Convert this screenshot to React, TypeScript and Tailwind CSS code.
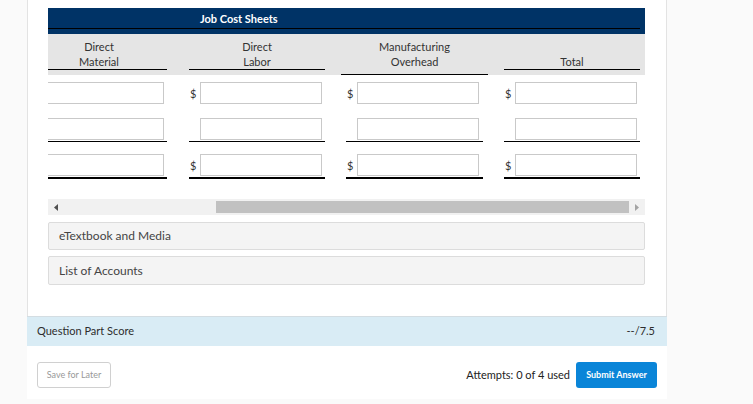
import React from "react";

const cols = [
  "w-[136px]",
  "ml-[22px] w-[136px]",
  "ml-[21px] w-[137px]",
  "ml-[21px] w-[136px]",
];

function DataRow({
  dollars,
  line,
  className,
}: {
  dollars: boolean;
  line: "none" | "thin" | "thick";
  className: string;
}) {
  return (
    <div className={`flex ${className}`}>
      {cols.map((c, i) => (
        <div key={i} className={`${c} flex flex-col`}>
          <div className="flex items-center h-[22px]">
            <span className="w-[11px] pl-px text-[11px] leading-none text-[#333]">
              {dollars && i > 0 ? "$" : ""}
            </span>
            <input
              type="text"
              className="w-[122px] h-[22px] border border-[#c9c9c9] bg-white outline-none"
            />
          </div>
          {line === "thin" && <div className="mt-px h-px bg-black" />}
          {line === "thick" && <div className="mt-px h-[2px] bg-black" />}
        </div>
      ))}
    </div>
  );
}

function HeadCell({ lines, cls }: { lines: string[]; cls: string }) {
  return (
    <div className={`${cls} flex flex-col`}>
      <div className="h-[35px] flex flex-col justify-end text-center text-[11px] leading-[15px] text-[#333]">
        {lines.map((l) => (
          <div key={l}>{l}</div>
        ))}
      </div>
      <div className="h-px bg-black" />
    </div>
  );
}

export default function App() {
  return (
    <div className="w-[753px] h-[404px] bg-[#fafafa] font-['Lato',sans-serif] overflow-hidden">
      <div className="ml-[27px] w-[640px] flex flex-col">
        {/* main panel */}
        <div className="h-[316px] bg-white border-l border-r border-[#e3e3e3] pl-[20px] pt-[8px]">
          <div className="w-[597px] overflow-hidden">
            <div className="ml-[-17px] w-[614px]">
              {/* navy header */}
              <div className="bg-[#003366] h-[26px] flex flex-col">
                <div className="h-[20px] flex items-center pl-[169px] text-white font-bold text-[11px] leading-none">
                  Job Cost Sheets
                </div>
                <div className="h-px w-[609px] bg-black" />
              </div>
              {/* gray header */}
              <div className="flex h-[41px] bg-[#e5e5e5]">
                <HeadCell lines={["Direct", "Material"]} cls={cols[0]} />
                <HeadCell lines={["Direct", "Labor"]} cls={cols[1]} />
                <div className={`${cols[2]} flex flex-col h-full`}>
                  <div className="h-[35px] flex flex-col justify-end text-center text-[11px] leading-[15px] text-[#333]">
                    <div>Manufacturing</div>
                    <div>Overhead</div>
                  </div>
                  <div className="mt-auto h-px bg-black mx-[-5px]" />
                </div>
                <HeadCell lines={["Total"]} cls={cols[3]} />
              </div>
              {/* rows */}
              <DataRow dollars line="none" className="mt-[7px]" />
              <DataRow dollars={false} line="thin" className="mt-[14px]" />
              <DataRow dollars line="thick" className="mt-[12px]" />
            </div>
          </div>

          {/* scrollbar */}
          <div className="mt-[20px] w-[597px] h-[16px] bg-[#f1f1f1] flex">
            <div className="w-[16px] h-full flex items-center justify-center">
              <svg width="4" height="7" viewBox="0 0 4 7">
                <polygon points="4,0 0,3.5 4,7" fill="#505050" />
              </svg>
            </div>
            <div className="w-[152px]" />
            <div className="flex-1 my-[2px] bg-[#c1c1c1]" />
            <div className="w-[16px] h-full flex items-center justify-center">
              <svg width="4" height="7" viewBox="0 0 4 7">
                <polygon points="0,0 4,3.5 0,7" fill="#a3a3a3" />
              </svg>
            </div>
          </div>

          {/* link boxes */}
          <div className="mt-[7px] w-[597px] h-[28px] bg-[#f4f4f4] border border-[#dcdcdc] rounded-[2px] flex items-center pl-[10px] text-[12px] text-[#444]">
            eTextbook and Media
          </div>
          <div className="mt-[6px] w-[597px] h-[29px] bg-[#f4f4f4] border border-[#dcdcdc] rounded-[2px] flex items-center pl-[10px] text-[12px] text-[#444]">
            List of Accounts
          </div>
        </div>

        {/* score bar */}
        <div className="h-[30px] bg-[#d9ecf5] border-t border-[#d4dde2] flex items-center justify-between pl-[10px] pr-[12px] text-[11px] text-[#2d2d2d]">
          <span>Question Part Score</span>
          <span>--/7.5</span>
        </div>

        {/* footer */}
        <div className="h-[53px] bg-white flex items-start justify-between px-[10px] pt-[16px]">
          <button className="w-[74px] h-[26px] border border-[#d0d0d0] rounded-[3px] bg-white text-[9px] text-[#999] flex items-center justify-center">
            Save for Later
          </button>
          <div className="flex items-center h-[26px]">
            <span className="text-[11px] text-[#222] mr-[6px]">Attempts: 0 of 4 used</span>
            <button className="w-[81px] h-[26px] rounded-[3px] bg-[#0a85d8] text-white font-bold text-[9px] flex items-center justify-center">
              Submit Answer
            </button>
          </div>
        </div>
      </div>
    </div>
  );
}
